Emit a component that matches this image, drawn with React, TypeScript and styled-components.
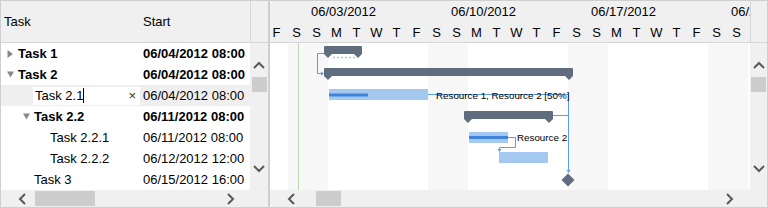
import React from "react";
import styled, { createGlobalStyle } from "styled-components";

const Global = createGlobalStyle`
  html, body { margin: 0; padding: 0; background: #fff; }
  body { font-family: "Liberation Sans", Arial, sans-serif; font-size: 13px; color: #000; }
  * { box-sizing: border-box; }
`;

const GanttRoot = styled.div`
  width: 768px;
  height: 208px;
  border: 1px solid #cfcfcf;
  display: flex;
  background: #fff;
  overflow: hidden;
`;

const Pane = styled.div<{ $main: number; $scroll: number; $side: "left" | "right" }>`
  display: grid;
  grid-template-columns: ${(p) => p.$main}px ${(p) => p.$scroll}px;
  grid-template-rows: 42px 147px 17px;
  flex: none;
  ${(p) => (p.$side === "left" ? "border-right: 1px solid #cfcfcf;" : "border-left: 1px solid #cfcfcf;")}
`;

const HeaderCell = styled.div`
  background: #f0f0f0;
  border-bottom: 1px solid #d6d6d6;
  overflow: hidden;
`;

const HeaderCorner = styled.div`
  background: #f0f0f0;
  border-bottom: 1px solid #d6d6d6;
  border-left: 1px solid #d6d6d6;
`;

const GridHeaderRow = styled.div`
  display: grid;
  grid-template-columns: 141px 1fr;
  height: 100%;
  align-items: center;
`;

const HeaderLabel = styled.span<{ $pad: number }>`
  padding-left: ${(p) => p.$pad}px;
  white-space: nowrap;
`;

const GridBody = styled.div`
  display: grid;
  grid-auto-rows: 21px;
  overflow: hidden;
  background: #fff;
`;

const Row = styled.div<{ $selected?: boolean }>`
  display: grid;
  grid-template-columns: 141px 1fr;
  align-items: center;
  background: ${(p) => (p.$selected ? "#efefef" : "#fff")};
  white-space: nowrap;
`;

const TreeCell = styled.div<{ $level: number; $bold?: boolean }>`
  display: flex;
  align-items: center;
  padding-left: ${(p) => 5 + p.$level * 16}px;
  font-weight: ${(p) => (p.$bold ? 700 : 400)};
  overflow: hidden;
`;

const ToggleSlot = styled.span`
  width: 12px;
  flex: none;
  display: flex;
  align-items: center;
  padding-left: 1px;
`;

const DateCell = styled.div<{ $bold?: boolean }>`
  padding-left: 1px;
  font-weight: ${(p) => (p.$bold ? 700 : 400)};
`;

const Editor = styled.div`
  margin-left: 32px;
  width: 107px;
  height: 18px;
  background: #fff;
  display: flex;
  align-items: center;
  padding-left: 2px;
  padding-right: 4px;
`;

const Caret = styled.span`
  display: inline-block;
  width: 1px;
  height: 15px;
  background: #000;
`;

const ClearMark = styled.span`
  margin-left: auto;
  font-size: 13px;
  color: #333;
`;

const VScroll = styled.div`
  background: #f0f0f0;
  display: flex;
  flex-direction: column;
  align-items: center;
`;

const ScrollBtn = styled.div<{ $mt?: number; $mb?: number; $ml?: number; $mr?: number }>`
  width: 16px;
  height: 16px;
  flex: none;
  display: flex;
  align-items: center;
  justify-content: center;
  margin: ${(p) => p.$mt ?? 0}px ${(p) => p.$mr ?? 0}px ${(p) => p.$mb ?? 0}px ${(p) => p.$ml ?? 0}px;
`;

const VThumb = styled.div`
  width: 15px;
  height: 15px;
  margin-top: 4px;
  background: #cdcdcd;
  flex: none;
`;

const Spacer = styled.div`
  flex: 1;
`;

const HScroll = styled.div`
  background: #f0f0f0;
  display: flex;
  align-items: center;
`;

const HThumb = styled.div<{ $offset: number; $size: number }>`
  height: 15px;
  width: ${(p) => p.$size}px;
  margin-left: ${(p) => p.$offset}px;
  background: #cdcdcd;
  flex: none;
`;

const Corner = styled.div`
  background: #f0f0f0;
`;

const Timeline = styled.div<{ $scroll: number }>`
  display: flex;
  flex-direction: column;
  height: 100%;
  margin-left: ${(p) => -p.$scroll}px;
`;

const TimeRow = styled.div<{ $h: number }>`
  display: flex;
  height: ${(p) => p.$h}px;
  align-items: center;
  white-space: nowrap;
  overflow: hidden;
`;

const WeekCell = styled.div<{ $w: number }>`
  width: ${(p) => p.$w}px;
  flex: none;
  padding-left: 3px;
  padding-top: 1px;
  overflow: hidden;
`;

const DayCell = styled.div`
  width: 20px;
  flex: none;
  text-align: center;
  padding-right: 3px;
  padding-top: 1px;
`;

const ChartBody = styled.div`
  overflow: hidden;
  background: #fff;
`;

type Dir = "up" | "down" | "left" | "right";
const Chevron = ({ dir }: { dir: Dir }) => {
  const vertical = dir === "up" || dir === "down";
  const paths: Record<Dir, string> = {
    up: "M1 7 L6 2 L11 7",
    down: "M1 2 L6 7 L11 2",
    left: "M7 1 L2 6 L7 11",
    right: "M2 1 L7 6 L2 11",
  };
  return (
    <svg width={vertical ? 12 : 9} height={vertical ? 9 : 12} viewBox={vertical ? "0 0 12 9" : "0 0 9 12"}>
      <path d={paths[dir]} fill="none" stroke="#5a5a5a" strokeWidth={2} />
    </svg>
  );
};

const Toggle = ({ open }: { open: boolean }) =>
  open ? (
    <svg width="7" height="7" viewBox="0 0 7 7">
      <polygon points="0,0.5 7,0.5 3.5,6.5" fill="#8a8a8a" />
    </svg>
  ) : (
    <svg width="7" height="8" viewBox="0 0 7 8">
      <polygon points="0.5,0 6,4 0.5,8" fill="#8a8a8a" />
    </svg>
  );

type Task = {
  name: string;
  start: string;
  level: number;
  summary?: boolean;
  open?: boolean;
  editing?: boolean;
};

const tasks: Task[] = [
  { name: "Task 1", start: "06/04/2012 08:00", level: 0, summary: true, open: false },
  { name: "Task 2", start: "06/04/2012 08:00", level: 0, summary: true, open: true },
  { name: "Task 2.1", start: "06/04/2012 08:00", level: 1, editing: true },
  { name: "Task 2.2", start: "06/11/2012 08:00", level: 1, summary: true, open: true },
  { name: "Task 2.2.1", start: "06/11/2012 08:00", level: 2 },
  { name: "Task 2.2.2", start: "06/12/2012 12:00", level: 2 },
  { name: "Task 3", start: "06/15/2012 16:00", level: 1 },
];

const days = "FSSMTWTFSSMTWTFSSMTWTFSS".split("");
const weeks = [
  { w: 40, label: "" },
  { w: 140, label: "06/03/2012" },
  { w: 140, label: "06/10/2012" },
  { w: 140, label: "06/17/2012" },
  { w: 22, label: "06/24/2012" },
];

const SUMMARY = "#5f6d7e";
const BAR = "#a5c8f0";
const PROGRESS = "#3d84d8";
const LINK = "#5b9de6";

const summaryPath = (x1: number, x2: number, t: number) =>
  `M${x1} ${t + 1} Q${x1} ${t} ${x1 + 1} ${t} H${x2 - 1} Q${x2} ${t} ${x2} ${t + 1} V${t + 8} L${x2 - 4} ${t + 12} L${x2 - 8} ${t + 8} H${x1 + 8} L${x1 + 4} ${t + 12} L${x1} ${t + 8} Z`;

const Chart = () => (
  <svg width="480" height="147" viewBox="0 0 480 147">
    {[18, 158, 298, 438].map((x) => (
      <rect key={x} x={x} y={0} width={40} height={147} fill="#f7f7f7" />
    ))}
    <line x1={28.5} y1={0} x2={28.5} y2={147} stroke="#b6dcae" strokeWidth={1} />

    <path d="M54 10.5 H47.5 V30.5 H51" fill="none" stroke={LINK} strokeWidth={1} />
    <polygon points="51,28.5 54,30.5 51,32.5" fill={LINK} />

    <path d={summaryPath(54, 92, 3)} fill={SUMMARY} />
    <line x1={63} y1={14.5} x2={87} y2={14.5} stroke="#a5c8f0" strokeWidth={1.5} strokeDasharray="2 2" />

    <path d={summaryPath(54, 303, 25)} fill={SUMMARY} />

    <path d="M158 51.5 H298.5 V128" fill="none" stroke={LINK} strokeWidth={1} />
    <path d="M283 72.5 H298.5" fill="none" stroke={LINK} strokeWidth={1} />
    <polygon points="296.5,127 300.5,127 298.5,130" fill={LINK} />

    <rect x={59} y={46} width={99} height={11} fill={BAR} />
    <rect x={59} y={50.5} width={39} height={3} fill={PROGRESS} />
    <text x={166} y={55.5} fontSize="9.8" fontFamily="Liberation Sans, Arial, sans-serif" fill="#000">
      Resource 1, Resource 2 [50%]
    </text>

    <path d={summaryPath(194, 283, 68)} fill={SUMMARY} />

    <rect x={199} y={89} width={39} height={11} fill={BAR} />
    <rect x={199} y={93} width={39} height={3} fill={PROGRESS} />
    <text x={247} y={97.5} fontSize="9.8" fontFamily="Liberation Sans, Arial, sans-serif" fill="#000">
      Resource 2
    </text>
    <path d="M238 94.5 H245.5 V104.5 H229.5 V106" fill="none" stroke={LINK} strokeWidth={1} />
    <polygon points="227.5,106 231.5,106 229.5,109" fill={LINK} />

    <rect x={229} y={109} width={49} height={11} fill={BAR} />

    <polygon points="298,130.5 304.5,137 298,143.5 291.5,137" fill={SUMMARY} />
  </svg>
);

export default function App() {
  return (
    <>
      <Global />
      <GanttRoot>
        <Pane $main={249} $scroll={18} $side="left">
          <HeaderCell>
            <GridHeaderRow>
              <HeaderLabel $pad={3}>Task</HeaderLabel>
              <HeaderLabel $pad={1}>Start</HeaderLabel>
            </GridHeaderRow>
          </HeaderCell>
          <HeaderCorner />
          <GridBody>
            {tasks.map((t) => (
              <Row key={t.name} $selected={t.editing}>
                {t.editing ? (
                  <Editor>
                    {t.name}
                    <Caret />
                    <ClearMark>×</ClearMark>
                  </Editor>
                ) : (
                  <TreeCell $level={t.level} $bold={t.summary}>
                    <ToggleSlot>{t.summary && <Toggle open={!!t.open} />}</ToggleSlot>
                    {t.name}
                  </TreeCell>
                )}
                <DateCell $bold={t.summary}>{t.start}</DateCell>
              </Row>
            ))}
          </GridBody>
          <VScroll>
            <ScrollBtn $mt={14}>
              <Chevron dir="up" />
            </ScrollBtn>
            <VThumb />
            <Spacer />
            <ScrollBtn $mb={14}>
              <Chevron dir="down" />
            </ScrollBtn>
          </VScroll>
          <HScroll>
            <ScrollBtn $ml={13}>
              <Chevron dir="left" />
            </ScrollBtn>
            <HThumb $offset={5} $size={60} />
            <Spacer />
            <ScrollBtn $mr={12}>
              <Chevron dir="right" />
            </ScrollBtn>
          </HScroll>
          <Corner />
        </Pane>
        <Pane $main={480} $scroll={17} $side="right">
          <HeaderCell>
            <Timeline $scroll={2}>
              <TimeRow $h={20}>
                {weeks.map((w, i) => (
                  <WeekCell key={i} $w={w.w}>
                    {w.label}
                  </WeekCell>
                ))}
              </TimeRow>
              <TimeRow $h={21}>
                {days.map((d, i) => (
                  <DayCell key={i}>{d}</DayCell>
                ))}
              </TimeRow>
            </Timeline>
          </HeaderCell>
          <HeaderCorner />
          <ChartBody>
            <Chart />
          </ChartBody>
          <VScroll>
            <ScrollBtn $mt={14}>
              <Chevron dir="up" />
            </ScrollBtn>
            <VThumb />
            <Spacer />
            <ScrollBtn $mb={14}>
              <Chevron dir="down" />
            </ScrollBtn>
          </VScroll>
          <HScroll>
            <ScrollBtn $ml={13}>
              <Chevron dir="left" />
            </ScrollBtn>
            <HThumb $offset={17} $size={25} />
            <Spacer />
            <ScrollBtn $mr={13}>
              <Chevron dir="right" />
            </ScrollBtn>
          </HScroll>
          <Corner />
        </Pane>
      </GanttRoot>
    </>
  );
}
